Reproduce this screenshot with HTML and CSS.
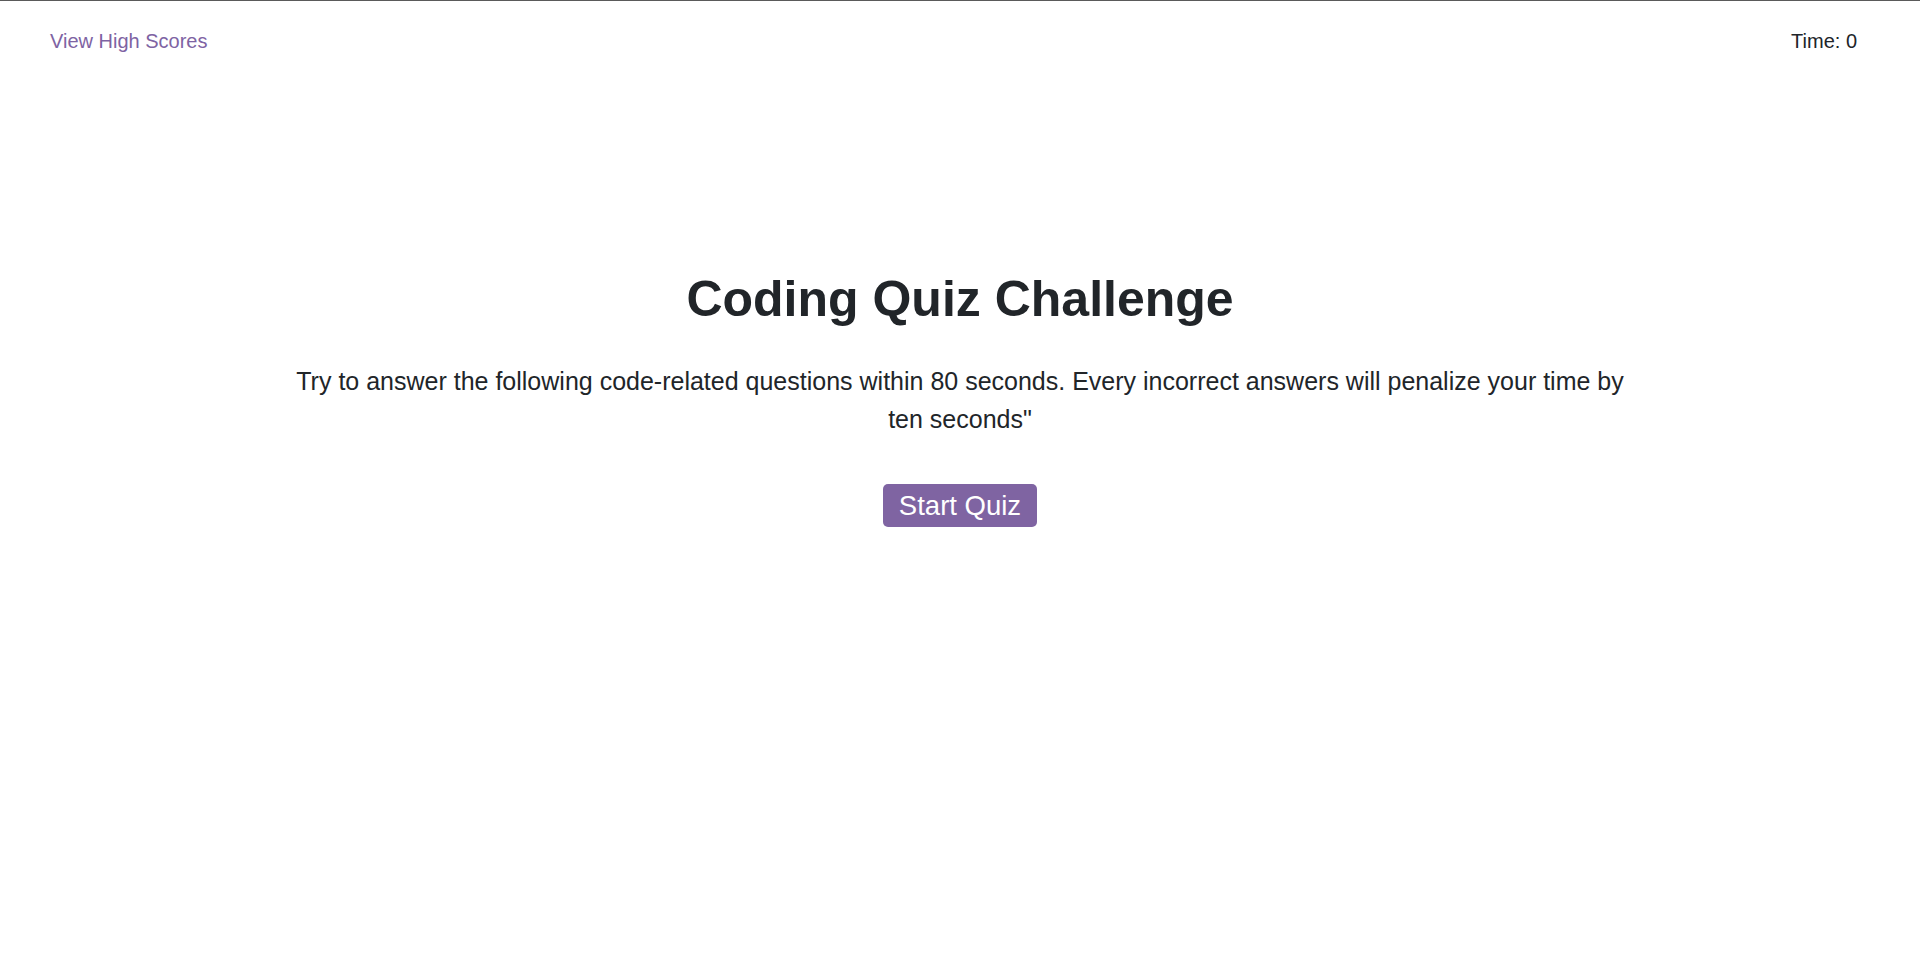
FILE: index.html
```html
<!DOCTYPE html>
<html lang="en">
<head>
<meta charset="utf-8">
<title>Coding Quiz Challenge</title>
<link rel="stylesheet" href="styles.css">
</head>
<body>
<header class="topbar">
  <a class="highscores" href="#">View High Scores</a>
  <div class="timer">Time: 0</div>
</header>
<main class="intro">
  <h1 class="title">Coding Quiz Challenge</h1>
  <p class="lead">Try to answer the following code-related questions within 80 seconds. Every incorrect answers will penalize your time by ten seconds"</p>
  <button class="start-btn" type="button">Start Quiz</button>
</main>
</body>
</html>
```

FILE: styles.css
```css
html, body {
  margin: 0;
  padding: 0;
  background: #ffffff;
}
body {
  border-top: 1px solid #5a5a5a;
  font-family: "Liberation Sans", Arial, sans-serif;
  color: #212529;
  min-height: 952px;
}
.topbar {
  display: flex;
  justify-content: space-between;
  align-items: flex-start;
  padding: 25px 63px 0 50px;
  font-size: 20px;
  line-height: 30px;
}
.highscores {
  color: #7e63a3;
  text-decoration: none;
}
.timer {
  color: #212529;
}
.intro {
  display: flex;
  flex-direction: column;
  align-items: center;
  text-align: center;
  padding-top: 213px;
}
.title {
  margin: 0;
  font-size: 50px;
  line-height: 60px;
  font-weight: 700;
  color: #212529;
}
.lead {
  margin: 34px 0 0;
  width: 1340px;
  font-size: 25px;
  line-height: 37.5px;
  color: #212529;
}
.start-btn {
  margin-top: 46px;
  font-family: "Liberation Sans", Arial, sans-serif;
  font-size: 27.5px;
  line-height: 33px;
  padding: 5px 16px;
  color: #ffffff;
  background: #7f64a2;
  border: none;
  border-radius: 5px;
  cursor: pointer;
}
```
